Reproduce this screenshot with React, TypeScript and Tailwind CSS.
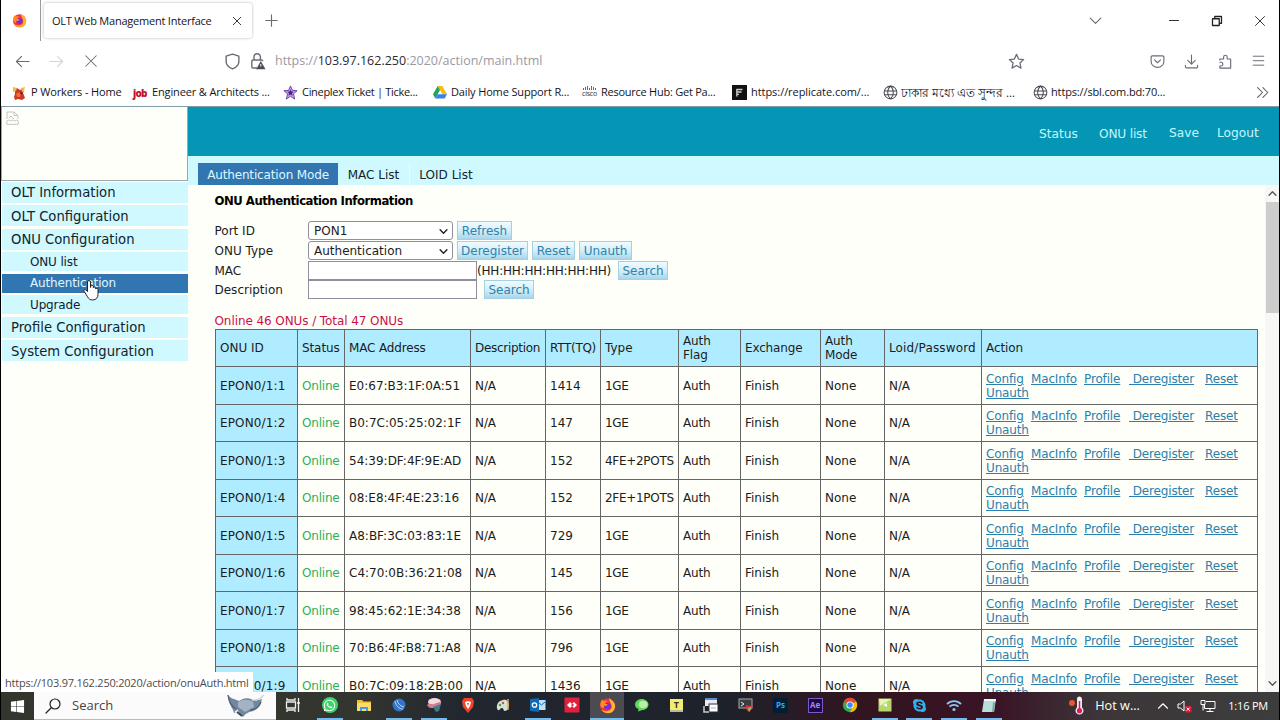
import type { ReactNode } from "react";
import clsx from "clsx";
import { FaWhatsapp, FaWindows, FaSkype } from "react-icons/fa";

interface OnuRow {
    id: string;
    mac: string;
    rtt: string;
    type: string;
}

const onus: OnuRow[] = [
    { id: "EPON0/1:1", mac: "E0:67:B3:1F:0A:51", rtt: "1414", type: "1GE" },
    { id: "EPON0/1:2", mac: "B0:7C:05:25:02:1F", rtt: "147", type: "1GE" },
    { id: "EPON0/1:3", mac: "54:39:DF:4F:9E:AD", rtt: "152", type: "4FE+2POTS" },
    { id: "EPON0/1:4", mac: "08:E8:4F:4E:23:16", rtt: "152", type: "2FE+1POTS" },
    { id: "EPON0/1:5", mac: "A8:BF:3C:03:83:1E", rtt: "729", type: "1GE" },
    { id: "EPON0/1:6", mac: "C4:70:0B:36:21:08", rtt: "145", type: "1GE" },
    { id: "EPON0/1:7", mac: "98:45:62:1E:34:38", rtt: "156", type: "1GE" },
    { id: "EPON0/1:8", mac: "70:B6:4F:B8:71:A8", rtt: "796", type: "1GE" },
    { id: "EPON0/1:9", mac: "B0:7C:09:18:2B:00", rtt: "1436", type: "1GE" },
];

function Line({ d, size = 16, className, sw = 1.2 }: { d: string; size?: number; className?: string; sw?: number }) {
    return (
        <svg
            width={size}
            height={size}
            viewBox="0 0 16 16"
            fill="none"
            stroke="currentColor"
            strokeWidth={sw}
            strokeLinecap="round"
            strokeLinejoin="round"
            className={clsx("shrink-0", className)}
        >
            <path d={d} />
        </svg>
    );
}

function Firefox({ size }: { size: number }) {
    return (
        <svg width={size} height={size} viewBox="0 0 16 16" className="shrink-0">
            <circle cx="8" cy="8.3" r="7" fill="#f5313f" />
            <path d="M10 .6c.4 2 4.900 3.200 5.200 7.500.2 4.200-2.700 7.300-6.700 7.300-2.500 0-5-1.200-6.200-3.300 4.500 2.500 9.500 1 9.700-3.100C12.100 5.700 8.900 4 10 .6z" fill="#ffb62e" />
            <path d="M1.200 6.500C1.500 4.300 2.200 3 3.200 2c.2 1 .7 1.400 1.400 1.700C6 3.200 7.500 3.600 8 4.500 5.700 4.600 5.500 6 6 7l-2 3.500C2 10 1 8.500 1.200 6.500z" fill="#ff8a1e" />
            <circle cx="8" cy="8.600" r="3.100" fill="#7b2fd0" />
            <path d="M4.500 6.800c1.500-.7 3-.3 3.700.7l-1.700.8c-.8.3-1.500 0-2-1.500z" fill="#ff9a2e" />
        </svg>
    );
}

function Globe() {
    return <Line size={15} className="text-[#4a4a52]" sw={1.1} d="M8 1.200a6.800 6.800 0 1 0 0 13.600a6.800 6.800 0 1 0 0-13.600zM8 1.200c-4 3.500-4 10 0 13.600M8 1.200c4 3.500 4 10 0 13.600M1.500 6.500h13M1.500 10.500h13" />;
}

function TabStrip() {
    return (
        <div className="flex h-[41px] items-center text-[#6b6b76]">
            <div className="flex h-full w-[40px] items-center border-r border-[#9a9a9a] pl-[11px]">
                <Firefox size={15} />
            </div>
            <div className="ml-[3px] flex h-[35px] w-[208px] items-center justify-between rounded-[3px] bg-white pr-[10px] pl-[8px] shadow-[0_0_3px_rgba(0,0,0,0.3)]">
                <span className="pt-px text-[11px] tracking-[-0.22px] whitespace-nowrap text-[#15141a]">OLT Web Management Interface</span>
                <Line size={10} sw={1.600} className="text-[#3a3a42]" d="M2 2l12 12M14 2L2 14" />
            </div>
            <Line size={13} sw={1.400} className="ml-[13px]" d="M8 1v14M1 8h14" />
            <div className="ml-auto flex items-center pr-[13px]">
                <Line size={13} sw={1.400} className="mr-[66px]" d="M1.500 5l6.500 6.500L14.500 5" />
                <Line size={12} sw={1.500} className="mr-[31px] text-[#333]" d="M2 7.300h12" />
                <Line size={12} sw={1.700} className="mr-[31px] text-[#222]" d="M2 5h9v9H2zM5 5V2h9v9h-3" />
                <Line size={12} sw={1.300} className="text-[#333]" d="M2 2l12 12M14 2L2 14" />
            </div>
        </div>
    );
}

function Toolbar() {
    return (
        <div className="flex h-[40px] items-center text-[#6b6b76]">
            <Line size={15} className="ml-[14px]" d="M15 8H1.500M7 2.500L1.500 8L7 13.500" />
            <Line size={15} className="ml-[19px] text-[#d3d3d8]" d="M1 8h13.500M9 2.500L14.500 8L9 13.500" />
            <Line size={14} className="ml-[19.500px]" d="M2 2l12 12M14 2L2 14" />
            <Line size={17} sw={1.300} className="ml-[126.500px]" d="M8 1L14 3v5c0 3-2.500 5.500-6 7c-3.500-1.500-6-4-6-7V3z" />
            <svg width="16" height="18" viewBox="0 0 16 18" fill="none" className="ml-[9px] shrink-0">
                <path d="M4 8V5a3.200 3.200 0 0 1 6.400 0v3M7 16H3a1.200 1.200 0 0 1-1.200-1.200V9.200A1.200 1.200 0 0 1 3 8h8.500a1.200 1.200 0 0 1 1.200 1.200" stroke="#6b6b76" strokeWidth="1.400" />
                <path d="M10.800 9l4.700 8.200H6.200z" fill="#4c4c56" />
                <path d="M10.800 12v2.500" stroke="#fff" />
            </svg>
            <div className="ml-[9px] pt-px text-[12.500px] text-[#9a9aa2]">
                https://<span className="text-[#2b2a33]">103.97.162.250</span>:2020/action/main.html
            </div>
            <div className="ml-auto flex items-center pr-[14px]">
                <Line size={17} className="mr-[125px]" d="M8 1.300l2 4.400l4.700.5l-3.500 3.200l1 4.800L8 11.800l-4.200 2.400l1-4.800L1.300 6.200L6 5.700z" />
                <Line size={15} className="mr-[19px]" d="M2.500 2h11a1.300 1.300 0 0 1 1.300 1.300V8a6.800 6.300 0 0 1-13.600 0V3.300A1.300 1.300 0 0 1 2.500 2zM4.800 6.300L8 9.300l3.200-3" />
                <Line size={15} className="mr-[19px]" d="M8 1v9.500M4 6.800l4 4l4-4M1.500 12v1.500a1.300 1.300 0 0 0 1.300 1.300h10.400a1.300 1.300 0 0 0 1.300-1.300V12" />
                <Line size={15} className="mr-[19px]" d="M2 6.500V5.300h4V3.200a1.900 1.900 0 0 1 3.800 0v2.100h3.700V15H2v-2.200h1.200a2 2 0 0 0 0-4H2" />
                <Line size={13} d="M1.500 1.500h13M1.500 7h13M1.500 12.500h13" />
            </div>
        </div>
    );
}

function Bookmark({ icon, label, className }: { icon: ReactNode; label: string; className: string }) {
    return (
        <div className={clsx("flex shrink-0 items-center whitespace-nowrap", className)}>
            {icon}
            <span>{label}</span>
        </div>
    );
}

function Bookmarks() {
    return (
        <div className="flex h-[25px] items-center pb-[2px] pl-[11px] text-[11px] tracking-[-0.14px] text-[#15141a]">
            <Bookmark
                className="w-[121px] gap-[5px]"
                label="P Workers - Home"
                icon={
                    <svg width="14" height="14" viewBox="0 0 14 14">
                        <path d="M3 3l2-1 3 2 4-2v2l-1 3 2 5-3 2-4-1-3 1-1-3 1-3z" fill="#c93a26" />
                        <path d="M1 1l4 1-1 3-3 1zM9 2l4-1-1 4-2 1z" fill="#f6b64a" />
                        <path d="M4 8l3-2 2 2-1 3H5z" fill="#ef6a3c" />
                        <path d="M8 6l3 1-2 2z" fill="#5f1a14" />
                    </svg>
                }
            />
            <Bookmark
                className="w-[150px] gap-[4px]"
                label="Engineer & Architects ..."
                icon={<b className="w-[15px] text-[10px] leading-none font-black tracking-[-0.8px] text-[#c4122f]">job</b>}
            />
            <Bookmark
                className="w-[150px] gap-[4px] tracking-[-0.3px]"
                label="Cineplex Ticket | Ticke..."
                icon={
                    <svg width="15" height="15" viewBox="0 0 16 16">
                        <path d="M8 1l2 4.700 5 .4-3.800 3.300L12.400 15 8 12l-4.400 3 1.200-5.600L1 6.100l5-.4z" fill="#c9a6e8" stroke="#6a3aa8" />
                        <path d="M8 4.500l1 2.500 2.600.2-2 1.700.7 2.600L8 10.200l-2.300 1.300.7-2.600-2-1.700L7 7z" fill="#4b1e8f" />
                    </svg>
                }
            />
            <Bookmark
                className="w-[149px] gap-[4px]"
                label="Daily Home Support R..."
                icon={
                    <svg width="14" height="13" viewBox="0 0 14 13">
                        <path d="M4.700 0h4.600L14 8.300H9.400z" fill="#fbbc05" />
                        <path d="M4.700 0L7 4 2.300 12.500 0 8.300z" fill="#1fa463" />
                        <path d="M4.600 8.300H14l-2.300 4.200H2.300z" fill="#3b7ff0" />
                    </svg>
                }
            />
            <Bookmark
                className="w-[150px] gap-[4px] tracking-[-0.25px]"
                label="Resource Hub: Get Pa..."
                icon={
                    <span className="mb-[3px] flex w-[15px] flex-col items-center">
                        <svg width="13" height="4" viewBox="0 0 13 4" stroke="#444" strokeWidth=".8">
                            <path d="M.5 2v2M2.500 1v3M4.500 0v4M6.500 2v2M8.500 0v4M10.500 1v3M12.500 2v2" />
                        </svg>
                        <span className="text-[7px] leading-[7px] text-[#333]">cisco</span>
                    </span>
                }
            />
            <Bookmark
                className="w-[151px] gap-[4px] tracking-[-0.05px]"
                label="https://replicate.com/..."
                icon={
                    <svg width="15" height="15" viewBox="0 0 15 15">
                        <rect width="15" height="15" fill="#111" />
                        <path d="M4.500 4.500h6M4.500 7h5M4.500 9.300h2.500M4.800 4v7.500" stroke="#ccc" strokeWidth="1.300" />
                    </svg>
                }
            />
            <Bookmark className="w-[150px] gap-[3px] text-[11.500px] tracking-normal" label="ঢাকার মধ্যে এত সুন্দর ..." icon={<Globe />} />
            <Bookmark className="gap-[3px]" label="https://sbl.com.bd:70..." icon={<Globe />} />
            <Line size={13} sw={1.300} className="mr-[10px] ml-auto text-[#5b5b66]" d="M2 2l6 6l-6 6M8.500 2l6 6l-6 6" />
        </div>
    );
}

function MenuItem({ label, sub, active }: { label: string; sub?: boolean; active?: boolean }) {
    return (
        <div
            className={clsx(
                "flex items-center",
                sub ? "mb-[2.500px] h-[19px] pl-[28px] text-[12px] tracking-[-0.15px]" : "mb-[2.700px] h-[20.800px] pt-[1.500px] pl-[9px] text-[13.200px]",
                active ? "bg-[#3276b1] text-[#dff6ff]" : "bg-[#cff8ff] text-[#10242c]"
            )}
        >
            {label}
        </div>
    );
}

function Sidebar() {
    return (
        <div className="w-[187px] shrink-0">
            <div className="mb-px h-[74px] border border-t-0 border-[#a5a5a5] bg-[#fffffa] p-[4px]">
                <svg width="13" height="14" viewBox="0 0 13 14" fill="none" stroke="#c4c4c4">
                    <path d="M1 8V1h7l4 3.500V8M8 1v3.500h4M3 7l2-2 3 3M.8 10l2-1 2 1 2-1 2 1 2-1 1.500 1v3.300H.8z" />
                </svg>
            </div>
            <div className="pl-px">
                <MenuItem label="OLT Information" />
                <MenuItem label="OLT Configuration" />
                <MenuItem label="ONU Configuration" />
                <MenuItem sub label="ONU list" />
                <MenuItem sub active label="Authentication" />
                <MenuItem sub label="Upgrade" />
                <MenuItem label="Profile Configuration" />
                <MenuItem label="System Configuration" />
            </div>
        </div>
    );
}

function Btn({ children, className }: { children: ReactNode; className?: string }) {
    return (
        <button
            className={clsx(
                "h-[19px] shrink-0 border border-[#a5cfe2] bg-gradient-to-b from-[#f0fbff] via-[#d5effa] to-[#a9d6ea] pt-px text-[12px] leading-none text-[#2f82ac]",
                className
            )}
        >
            {children}
        </button>
    );
}

function Select({ value }: { value: string }) {
    return (
        <div className="flex h-[19px] w-[145px] items-center justify-between rounded-[3px] border border-[#8f8f9d] bg-white pt-px pr-[4px] pl-[5px]">
            {value}
            <Line size={9} sw={2.600} className="text-[#222]" d="M2 5l6 6l6-6" />
        </div>
    );
}

function Field({ label, children }: { label: string; children: ReactNode }) {
    return (
        <div className="flex h-[19.700px] items-center">
            <div className="w-[93.500px] shrink-0 pt-px">{label}</div>
            {children}
        </div>
    );
}

const input = "h-[19px] w-[169px] shrink-0 border border-[#8f8f9d] bg-white";

const columns: { label: string; width: string }[] = [
    { label: "ONU ID", width: "w-[82px]" },
    { label: "Status", width: "w-[47px] tracking-[-0.1px]" },
    { label: "MAC Address", width: "w-[126px] tracking-[-0.15px]" },
    { label: "Description", width: "w-[75px] tracking-[-0.3px]" },
    { label: "RTT(TQ)", width: "w-[55px] tracking-[-0.3px]" },
    { label: "Type", width: "w-[78px]" },
    { label: "Auth Flag", width: "w-[62px] tracking-[-0.1px]" },
    { label: "Exchange", width: "w-[80px] tracking-[-0.15px]" },
    { label: "Auth Mode", width: "w-[64px] tracking-[-0.1px]" },
    { label: "Loid/Password", width: "w-[97px] tracking-[0.15px]" },
    { label: "Action", width: "w-[276px] tracking-[-0.1px]" },
];

const cell = "border border-[#666] pt-px pr-0 pb-0 pl-[4.500px]";

function OnuTable() {
    return (
        <table className="w-[1042px] table-fixed border-collapse text-left text-[12px] leading-[14px] text-[#1c1c1c]">
            <thead>
                <tr className="h-[37px] bg-[#b0ecff]">
                    {columns.map((c) => (
                        <th key={c.label} className={clsx(cell, c.width, "font-normal")}>
                            {/* "Auth Flag" and "Auth Mode" break after the first word */}
                            <div className={c.label.startsWith("Auth") ? "w-[40px]" : ""}>{c.label}</div>
                        </th>
                    ))}
                </tr>
            </thead>
            <tbody>
                {onus.map((o, i) => (
                    <tr key={o.id} className={i % 2 ? "h-[37px]" : "h-[38px]"}>
                        <td className={clsx(cell, "bg-[#b0ecff] tracking-[0.15px]")}>{o.id}</td>
                        <td className={clsx(cell, "tracking-[-0.2px] text-[#2fae5c]")}>Online</td>
                        <td className={cell}>{o.mac}</td>
                        <td className={clsx(cell, "tracking-[-0.1px]")}>N/A</td>
                        <td className={cell}>{o.rtt}</td>
                        <td className={clsx(cell, "tracking-[-0.3px]")}>{o.type}</td>
                        <td className={clsx(cell, "tracking-[-0.2px]")}>Auth</td>
                        <td className={cell}>Finish</td>
                        <td className={cell}>None</td>
                        <td className={clsx(cell, "tracking-[-0.1px]")}>N/A</td>
                        <td className={cell}>
                            <div className="tracking-[-0.15px] text-[#2a7fae] underline">
                                <div className="flex whitespace-pre">
                                    <a className="w-[45px]">Config</a>
                                    <a className="w-[53px]">MacInfo</a>
                                    <a className="w-[45px]">Profile</a>
                                    <a className="w-[76px]"> Deregister</a>
                                    <a>Reset</a>
                                </div>
                                <a>Unauth</a>
                            </div>
                        </td>
                    </tr>
                ))}
            </tbody>
        </table>
    );
}

function Page() {
    return (
        <div className="relative flex h-[586px] overflow-hidden border-t border-[#7f9ea6] bg-[#fefff8] font-['DejaVu_Sans',Verdana,sans-serif]">
            <Sidebar />
            <div className="flex min-w-0 flex-1 flex-col">
                <div className="flex h-[49px] shrink-0 items-center bg-[#0696b5] pt-[5px] text-[12.200px] text-[#c4f6ff]">
                    <span className="ml-auto w-[60px]">Status</span>
                    <span className="w-[70px] tracking-[-0.2px]">ONU list</span>
                    <span className="w-[48px] pb-px">Save</span>
                    <span className="w-[62px] pb-px">Logout</span>
                </div>
                <div className="flex h-[29px] shrink-0 items-end bg-[#cff8ff] pl-[10px] text-[12px] text-[#10242c]">
                    <div className="flex h-[22px] w-[140px] items-center justify-center bg-[#3276b1] pt-px tracking-[-0.15px] text-[#dff6ff]">Authentication Mode</div>
                    <div className="flex h-[22px] w-[72px] items-center justify-center border-r border-[#e6fcff] pt-px">MAC List</div>
                    <div className="flex h-[22px] w-[72px] items-center justify-center pt-px">LOID List</div>
                </div>
                <div className="flex min-h-0 flex-1">
                    <div className="flex-1 overflow-hidden pt-[7px] pl-[26.500px] text-[12px] text-[#1c1c1c]">
                        <div className="h-[29px] text-[11.700px] leading-[19px] font-bold tracking-[-0.48px] text-black">ONU Authentication Information</div>
                        <Field label="Port ID">
                            <Select value="PON1" />
                            <Btn className="ml-[4px] w-[55px]">Refresh</Btn>
                        </Field>
                        <Field label="ONU Type">
                            <Select value="Authentication" />
                            <Btn className="ml-[4px] w-[71px]">Deregister</Btn>
                            <Btn className="ml-[4px] w-[43px]">Reset</Btn>
                            <Btn className="ml-[4px] w-[53px]">Unauth</Btn>
                        </Field>
                        <Field label="MAC">
                            <div className={input} />
                            <span className="w-[141px] shrink-0 pt-px tracking-[-0.2px]">(HH:HH:HH:HH:HH:HH)</span>
                            <Btn className="w-[50px]">Search</Btn>
                        </Field>
                        <Field label="Description">
                            <div className={input} />
                            <Btn className="ml-[7px] w-[50px]">Search</Btn>
                        </Field>
                        <div className="mt-[12px] h-[17px] leading-[18px] tracking-[-0.08px] text-[#c8104c]">Online 46 ONUs / Total 47 ONUs</div>
                        <OnuTable />
                    </div>
                    <div className="flex w-[14px] shrink-0 flex-col items-center bg-[#f7f7f5] py-[4px] text-[#555]">
                        <Line size={9} sw={2.400} d="M2 11l6-6l6 6" />
                        <div className="mt-[4px] h-[111px] w-[13px] bg-[#cdcdcd]" />
                        <Line size={9} sw={2.400} className="mt-auto" d="M2 5l6 6l6-6" />
                    </div>
                </div>
            </div>
            {/* Link target shown while a menu item is hovered */}
            <div className="absolute bottom-0 left-0 h-[20px] w-[252px] bg-white pl-[4px] font-['Open_Sans',sans-serif] text-[11px] leading-[22px] tracking-[-0.22px] whitespace-nowrap text-[#4c4c4c]">
                https://103.97.162.250:2020/action/onuAuth.html
            </div>
            {/* Hand cursor */}
            <svg width="18" height="22" viewBox="0 0 18 22" className="absolute top-[172px] left-[81px]">
                <path
                    d="M5.500 12.500V3a1.500 1.500 0 0 1 3 0v5.500l.3-1.300a1.300 1.300 0 0 1 2.500.3v1.200a1.300 1.300 0 0 1 2.400.3v1a1.200 1.200 0 0 1 2.300.5v5c0 3-2 5.500-5.300 5.500-2.700 0-4.200-1.300-5.200-3.300L2 12.200c-.6-1.200 1-2.200 2-1.200z"
                    fill="#fff"
                    stroke="#222"
                />
            </svg>
        </div>
    );
}

function Task({ children, on, active, className }: { children?: ReactNode; on?: boolean; active?: boolean; className?: string }) {
    return (
        <div
            className={clsx(
                "flex h-full w-[34.700px] shrink-0 items-center justify-center",
                active && "bg-[#4d4b52]",
                className
            )}
        >
            <div
                className={clsx(
                    "flex h-full items-center justify-center border-b-2",
                    active ? "w-full" : "w-[26px]",
                    on ? "border-[#76b9ed]" : "border-transparent"
                )}
            >
                {children}
            </div>
        </div>
    );
}

function Pic({ children }: { children: ReactNode }) {
    return (
        <svg width="16" height="16" viewBox="0 0 16 16">
            {children}
        </svg>
    );
}

function Taskbar() {
    return (
        <div className="flex h-[28px] bg-[linear-gradient(90deg,#33352f_0%,#33352f_28%,#22272f_36%,#1d222b_56%,#33141f_68%,#3a1426_78%,#3c3639_86%,#3d3d3d_100%)] text-white">
            <div className="flex w-[33px] items-center justify-center">
                <FaWindows size={15} />
            </div>
            <div className="flex w-[242px] items-center border-b border-[#bbb] bg-[#fbfbfb] pt-px text-[13px] text-[#444]">
                <Line size={16} sw={1.200} className="ml-[11px] text-[#222]" d="M10 1a5 5 0 1 0 0 10a5 5 0 1 0 0-10zM6.500 9.500L1 15" />
                <span className="ml-[11px]">Search</span>
                <svg width="38" height="24" viewBox="0 0 38 24" className="mr-[11px] ml-auto">
                    <path d="M1 1c3 4 7 4 11 6 4-3 9-4 14-1 3 1 6 0 9-1-1 6-4 10-9 12-4 1-7 2-10 6l-3-3-2-3-4 2-1-3C4 12 1 8 1 1z" fill="#7388a0" />
                    <path d="M11 8c5-3 11-3 15 0l1 5-9 5-7-5z" fill="#a3b3c4" />
                    <path d="M25 6c5 1 9-2 12-5" stroke="#cdd3da" strokeWidth="1.300" fill="none" />
                    <path d="M1 1c1 7 3 11 8 14M34 8c-2 5-6 8-11 8" stroke="#4a6076" strokeWidth="1.300" fill="none" />
                    <path d="M10 18l5 4" stroke="#3a4a5c" strokeWidth="2" />
                    <path d="M8 18l3-2" stroke="#eef2f5" strokeWidth="1.500" />
                </svg>
            </div>
            <Task className="mr-[1.500px]">
                <Pic>
                    <path d="M2 1v2h8V1M2 15v-2h8v2M1.500 5h9v6h-9zM13.500 1v14M12 6h3" stroke="#eee" strokeWidth="1.300" fill="none" />
                </Pic>
            </Task>
            <Task on>
                <span className="flex size-[16px] items-center justify-center rounded-full bg-[#3ed36a]">
                    <FaWhatsapp size={13} />
                </span>
            </Task>
            <Task>
                <Pic>
                    <path d="M1 3h5l1.500 1.500H15V14H1z" fill="#f0bf3a" />
                    <path d="M1 6h14v8H1z" fill="#fbdc6b" />
                    <path d="M4 10h8v4h-2v-2H6v2H4z" fill="#4b9be0" />
                </Pic>
            </Task>
            <Task on>
                <Pic>
                    <circle cx="8" cy="8" r="6.500" fill="#3474c4" />
                    <path d="M4 4c1 5 4 8 8 8M6 3c1 4 3 6 7 7" stroke="#b6dcff" fill="none" />
                </Pic>
            </Task>
            <Task on>
                <Pic>
                    <ellipse cx="8.500" cy="5" rx="6.500" ry="4" fill="#f4dbe2" />
                    <path d="M1 8c3-3 5 0 7-1s4-2 7-2c0 4-3 6-6 6S3 12 1 8z" fill="#d27d92" />
                    <path d="M7 10l8-3-2 7-3 1z" fill="#3d7c8c" />
                </Pic>
            </Task>
            <Task>
                <Pic>
                    <path d="M4 1h8l2 3-1 6-5 6-5-6-1-6z" fill="#f0432c" />
                    <path d="M5 5l3-1 3 1-1 4-2 3-2-3z" fill="#fff" />
                    <path d="M7 6h2l-1 3z" fill="#f0432c" />
                </Pic>
            </Task>
            <Task>
                <Pic>
                    <path d="M8 3c4-1 6 2 6 5s-2 6-4 6-1-3-3-3-2 3-4 2-2-9 5-10z" fill="#d9e0d4" />
                    <circle cx="5" cy="8" r="1.200" fill="#4a9a4e" />
                    <circle cx="8" cy="6" r="1.200" fill="#d0553c" />
                    <path d="M13 2v11" stroke="#d8a94c" strokeWidth="1.500" />
                </Pic>
            </Task>
            <Task on>
                <Pic>
                    <path d="M7 3h8.500v10H7z" fill="#bfe1f7" />
                    <path d="M8 5l3.500 3L15 5" stroke="#0f6ab5" fill="none" />
                    <path d="M0 2l9-1v14l-9-1z" fill="#0f6ab5" />
                    <circle cx="4.500" cy="8" r="2.200" fill="none" stroke="#fff" strokeWidth="1.300" />
                </Pic>
            </Task>
            <Task>
                <Pic>
                    <rect x=".5" y=".5" width="15" height="15" rx="1" fill="#e3203c" />
                    <path d="M3 8l3-3 2 2 2-2 3 3-3 3-2-2-2 2z" fill="#fff" />
                    <path d="M7 8l1.500-1.500L10 8 8.500 9.500z" fill="#e3203c" />
                </Pic>
            </Task>
            <Task on active>
                <Firefox size={17} />
            </Task>
            <Task>
                <Pic>
                    <path d="M7.500 2c4 0 7 2.500 7 5.500S12 13 8.500 13L4 14.500 4.500 12C2 11 1 9.500 1 7.500 1 4.500 4 2 7.500 2z" fill="#5fd35b" />
                    <ellipse cx="9" cy="7.500" rx="4.500" ry="3.800" fill="#b7f0a5" />
                </Pic>
            </Task>
            <Task>
                <span className="flex size-[13px] items-center justify-center border-b-2 border-[#b9b9a0] bg-[#f3ec6d] text-[9px] leading-none font-bold text-[#333]">T</span>
            </Task>
            <Task>
                <Pic>
                    <rect x="2" y="1" width="12" height="8" fill="#e8ecf2" />
                    <path d="M2 2h12" stroke="#5c8bd0" strokeWidth="2" />
                    <rect x="6" y="7" width="9" height="8" fill="#fff" stroke="#333" />
                    <path d="M1 9v6h5M8 11h5" stroke="#ccc" strokeWidth="1.500" fill="none" />
                </Pic>
            </Task>
            <Task>
                <Pic>
                    <rect x="1" y="2" width="13" height="9" fill="#3b3b40" stroke="#aaa" />
                    <path d="M3 5l3 2-3 2" stroke="#eee" fill="none" />
                    <path d="M8 8l3 1 4-1-1 4-3 3-3-3z" fill="#e0344e" />
                    <path d="M10 11l4-1-3 5z" fill="#7dc94f" />
                </Pic>
            </Task>
            <Task>
                <span className="flex size-[15px] items-center justify-center rounded-[2px] bg-[#001e36] text-[8px] leading-none font-bold text-[#31a8ff]">Ps</span>
            </Task>
            <Task>
                <span className="flex size-[15px] items-center justify-center border border-[#7a5bc8] bg-[#1f0740] text-[8px] leading-none font-bold text-[#a08cf0]">Ae</span>
            </Task>
            <Task>
                <Pic>
                    <circle cx="8" cy="8" r="7.200" fill="#34a853" />
                    <path d="M8 8L1.800 4.400A7.200 7.200 0 0 1 14.200 4.400z" fill="#ea4335" />
                    <path d="M8 8l6.200-3.600A7.200 7.200 0 0 1 8 15.200L11 9z" fill="#fbbc05" />
                    <circle cx="8" cy="8" r="3.600" fill="#fff" />
                    <circle cx="8" cy="8" r="2.700" fill="#4285f4" />
                </Pic>
            </Task>
            <Task on>
                <Pic>
                    <rect x="1.500" y="1.500" width="13" height="13" fill="#b5d66a" />
                    <path d="M2 2h12L3 9z" fill="#e7f3b8" />
                    <path d="M6 8l4-2v4z" fill="#fff" />
                </Pic>
            </Task>
            <Task on>
                <FaSkype size={15} color="#2fb2ee" />
            </Task>
            <Task on>
                <Pic>
                    <path d="M1 7a10 10 0 0 1 14 0M3.500 9.700a6.500 6.500 0 0 1 9 0" stroke="#8bc6f2" strokeWidth="1.800" fill="none" />
                    <circle cx="8" cy="12.500" r="1.600" fill="#8bc6f2" />
                </Pic>
            </Task>
            <Task on>
                <Pic>
                    <path d="M3 2h12l-2 13H1z" fill="#b7e0dc" />
                    <path d="M3 2h12v2H3z" fill="#eef6f5" />
                    <path d="M12 5l2 1-1 9h-2z" fill="#7ca8a0" />
                </Pic>
            </Task>
            <div className="ml-auto flex items-center pr-[11px] text-[12.700px]">
                <svg width="18" height="20" viewBox="0 0 18 20" className="mr-[9px]">
                    <circle cx="4" cy="7" r="3" fill="#e8572e" />
                    <path d="M9 3a2.500 2.500 0 0 1 5 0v8.500a4 4 0 1 1-5 0z" fill="#eee" />
                    <circle cx="11.500" cy="14.700" r="2.600" fill="#d81e5b" />
                    <path d="M11.500 5v8" stroke="#d81e5b" strokeWidth="1.500" />
                </svg>
                <span className="w-[62px]">Hot w...</span>
                <Line size={12} sw={1.500} className="mr-[8px] text-white" d="M2 11l6-6l6 6" />
                <svg width="15" height="14" viewBox="0 0 15 14" className="mr-[8px]">
                    <path d="M1 5h2.500L7 2v10L3.500 9H1z" stroke="#fff" fill="none" />
                    <rect x="8" y="7" width="6.500" height="6.500" rx="1" fill="#d81e3c" />
                    <path d="M9.700 8.700l3 3M12.700 8.700l-3 3" stroke="#fff" />
                </svg>
                <svg width="16" height="14" viewBox="0 0 16 14" className="mr-[12px]" stroke="#fff" fill="none">
                    <path d="M6 2.500h9v7H4.500V6M10 9.500V12M6.500 12.500h7M1 1.500h4v4H1zM3 5.500v6" />
                </svg>
                <span className="text-[11px] tracking-[-0.2px]">1:16 PM</span>
            </div>
        </div>
    );
}

export default function App() {
    return (
        <div className="h-[720px] w-[1280px] overflow-hidden border-x border-black bg-white font-['Open_Sans','Noto_Sans',sans-serif]">
            <TabStrip />
            <Toolbar />
            <Bookmarks />
            <Page />
            <Taskbar />
        </div>
    );
}
